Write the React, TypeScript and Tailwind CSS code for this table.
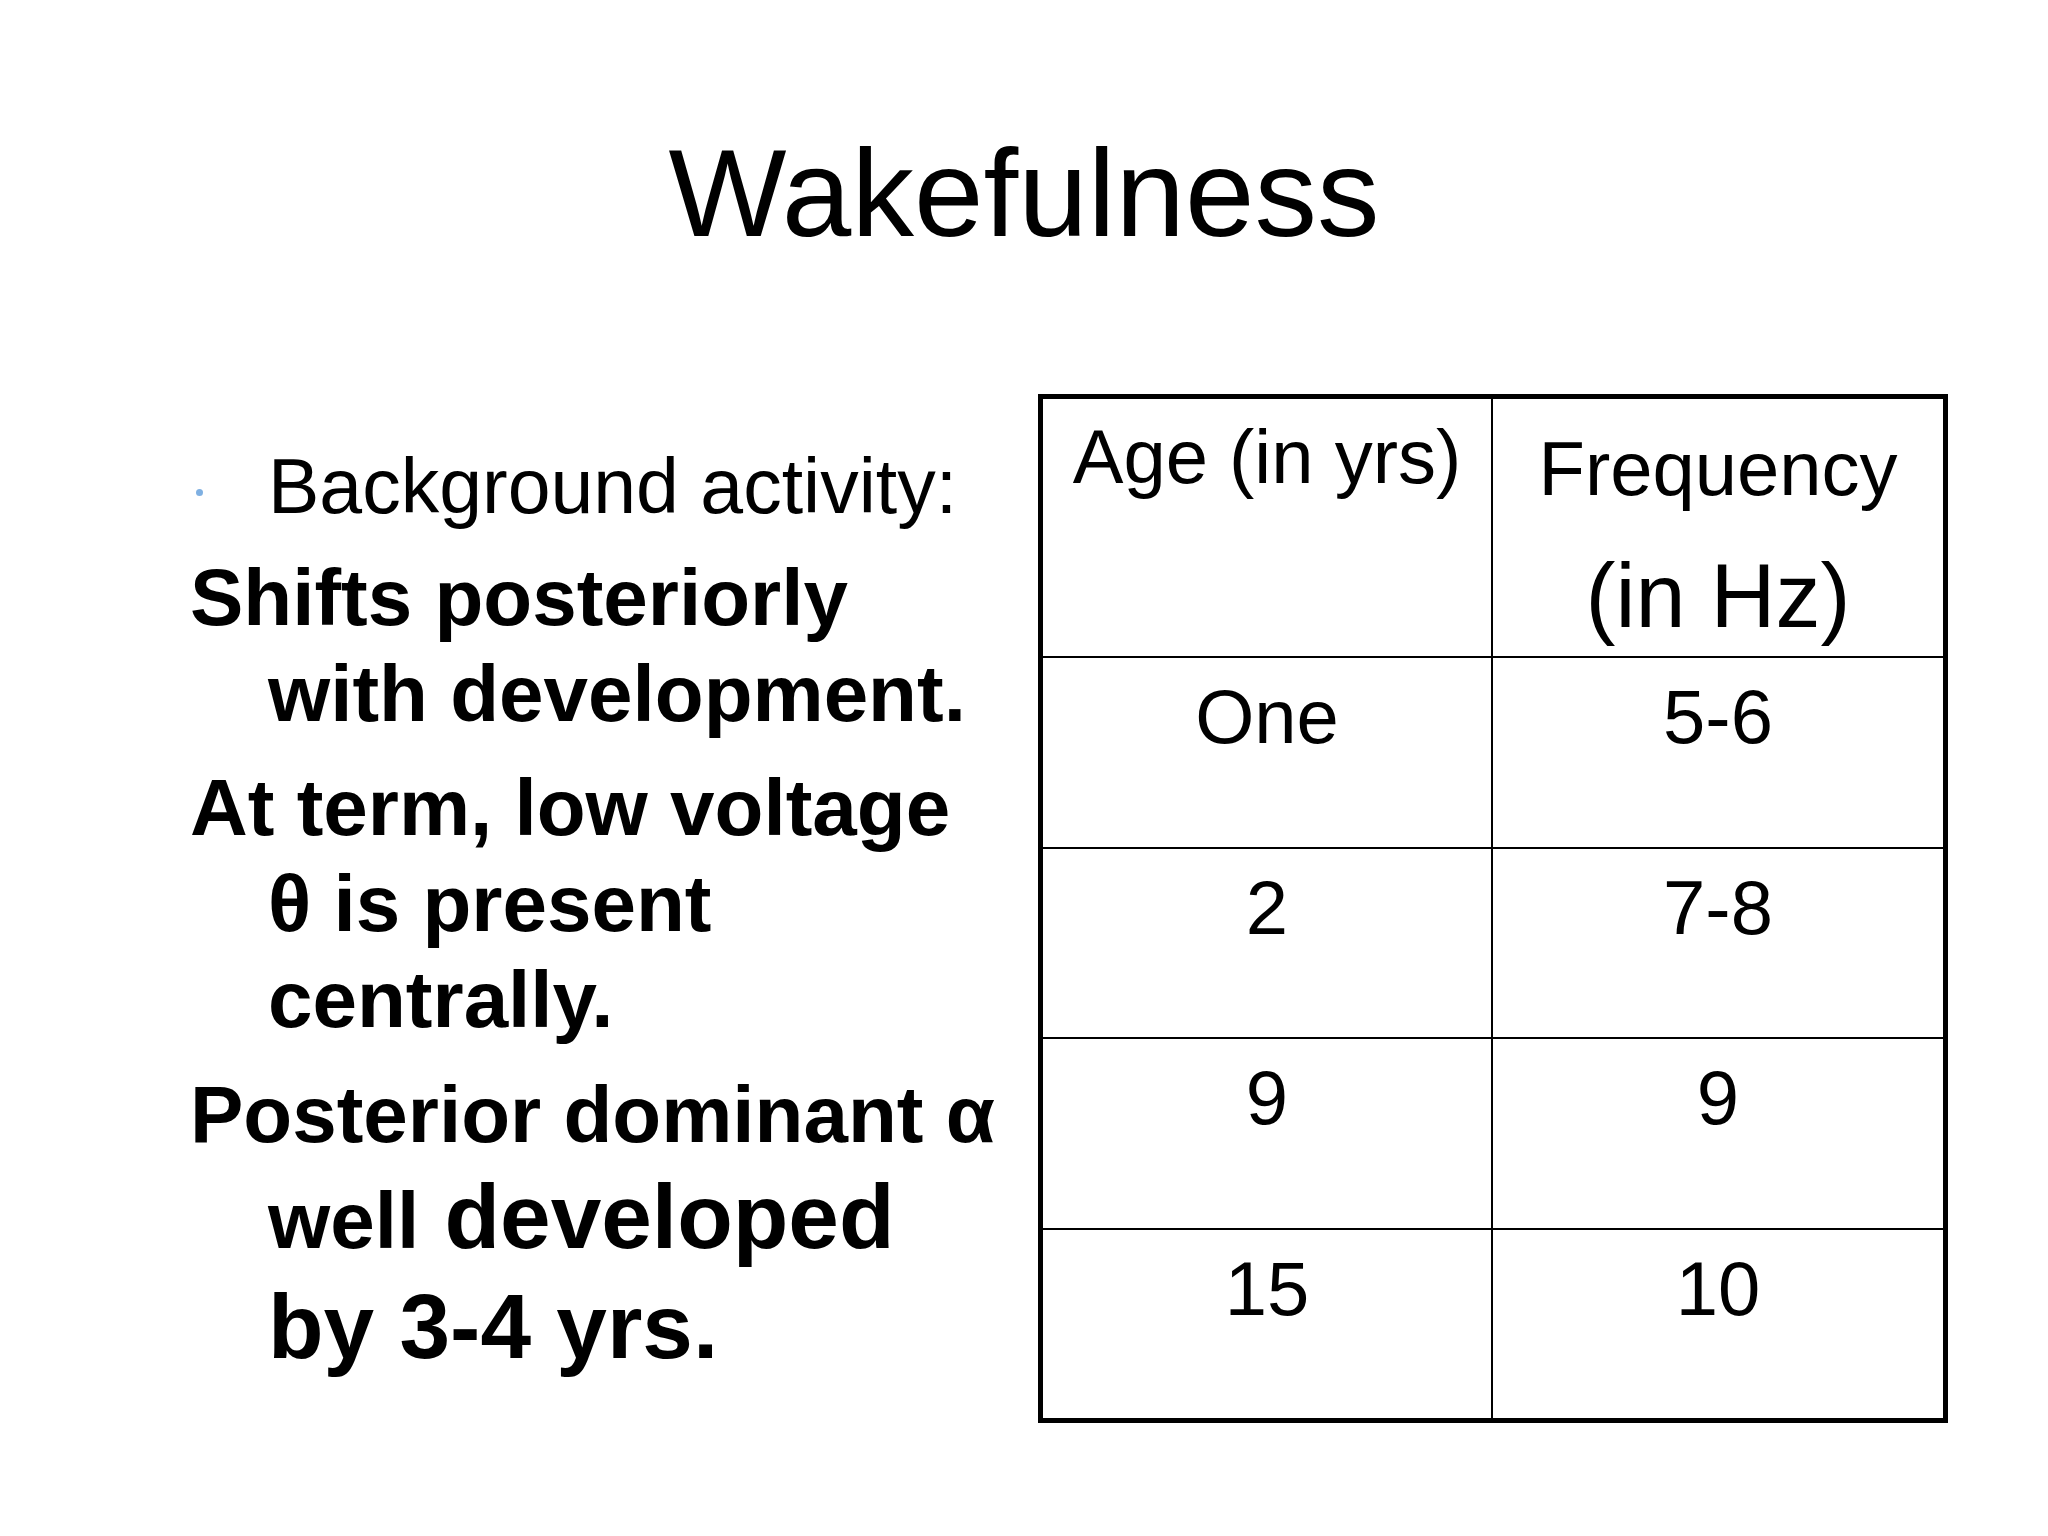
const rows = [
    { age: "One", freq: "5-6", h: "h-[191px]" },
    { age: "2", freq: "7-8", h: "h-[190px]" },
    { age: "9", freq: "9", h: "h-[191px]" },
    { age: "15", freq: "10", h: "h-[188px]" },
];

function AgeTable() {
    return (
        <div className="w-[910px] h-[1029px] border-[5px] border-black flex flex-col text-[76px] leading-none text-black">
            <div className="grid grid-cols-2 h-[259px] border-b-2 border-black">
                <div className="border-r-2 border-black text-center pt-[20px] whitespace-nowrap">
                    Age (in yrs)
                </div>
                <div className="text-center pt-[32px] whitespace-nowrap">
                    <div>Frequency</div>
                    <div className="text-[90px] mt-[44px]">(in Hz)</div>
                </div>
            </div>
            {rows.map((row, i) => (
                <div
                    key={row.age}
                    className={`grid grid-cols-2 ${row.h} ${
                        i < rows.length - 1 ? "border-b-2 border-black" : ""
                    }`}
                >
                    <div className="border-r-2 border-black text-center pt-[21px]">
                        {row.age}
                    </div>
                    <div className="text-center pt-[21px]">{row.freq}</div>
                </div>
            ))}
        </div>
    );
}

function Notes() {
    return (
        <div className="w-[848px] mt-[44px] whitespace-nowrap text-black">
            <div className="text-[77px] leading-[96px]">
                <span className="inline-block w-[7px] h-[7px] rounded-full bg-[#7fb0e2] align-middle ml-[6px] mr-[65px]" />
                Background activity:
            </div>

            <div className="font-bold text-[80px] leading-[96px] mt-[16px]">
                <div>Shifts posteriorly</div>
                <div className="pl-[78px]">with development.</div>
            </div>

            <div className="font-bold text-[80px] leading-[96px] mt-[18px]">
                <div>At term, low voltage</div>
                <div className="pl-[78px]">θ is present</div>
                <div className="pl-[78px]">centrally.</div>
            </div>

            <div className="font-bold mt-[19px]">
                <div className="text-[80px] leading-[96px]">
                    Posterior dominant α
                </div>
                <div className="pl-[78px] text-[91px] leading-[106px] mt-[1px]">
                    <span className="text-[80px]">well</span> developed
                </div>
                <div className="pl-[78px] text-[91px] leading-[106px]">
                    by 3-4 yrs.
                </div>
            </div>
        </div>
    );
}

export default function App() {
    return (
        <div className="w-[2048px] h-[1536px] bg-white overflow-hidden font-['Liberation_Sans',Arial,sans-serif]">
            <h1 className="pt-[130px] text-center text-[125px] leading-none font-normal text-black">
                Wakefulness
            </h1>
            <div className="flex items-start pl-[190px] mt-[139px]">
                <Notes />
                <AgeTable />
            </div>
        </div>
    );
}
